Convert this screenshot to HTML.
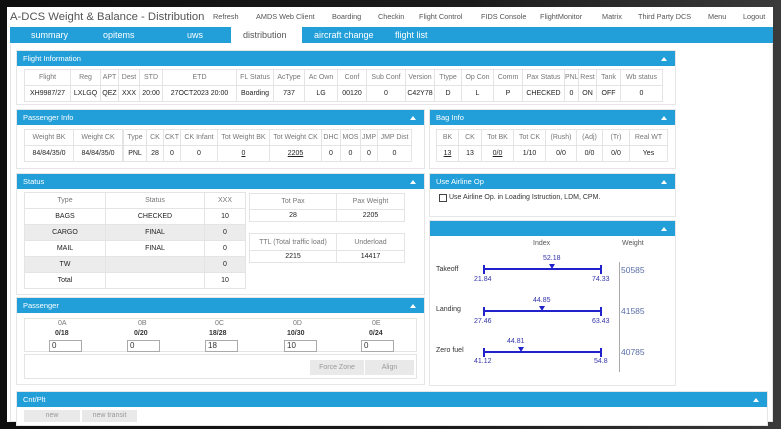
<!DOCTYPE html>
<html><head><meta charset="utf-8"><style>
*{box-sizing:border-box;margin:0;padding:0}
body{width:781px;height:429px;overflow:hidden;background:linear-gradient(90deg,#0e0e0e 0%,#1c1c1c 60%,#3a3a3a 100%);font-family:"Liberation Sans",sans-serif;position:relative;color:#333}
.a{position:absolute}
#win{left:7px;top:7px;width:766px;height:415px;background:#fff;overflow:hidden}
.nav{font-size:7.3px;color:#555;top:12px}
.hdr{background:#229fd9;color:#fff;font-size:7.5px;height:15px;line-height:15px;padding-left:6px}
.hdr:after{content:"";position:absolute;right:8px;top:6px;border-left:3px solid transparent;border-right:3px solid transparent;border-bottom:4px solid #fff}
table{border-collapse:collapse;position:absolute;table-layout:fixed;font-size:7px}
td{border:1px solid #e4e4e4;text-align:center;height:16px;white-space:nowrap;overflow:hidden;color:#222}
tr.h td{color:#777}
.pan{border:1px solid #e6e6e6;background:#fff}
.t{font-size:7px;white-space:nowrap}
u{text-decoration:underline}
.inp{position:absolute;height:12px;width:33px;border:1px solid #aaa;font-size:8px;padding-left:2px;line-height:10px}
.btn{position:absolute;background:#e9e9e9;color:#999;font-size:7px;text-align:center;line-height:15px}
.b{color:#3333aa;font-size:7px}
.tab{top:30px;font-size:9px;color:#fff}
</style></head><body>
<div id="win" class="a"></div>
<div class="a" style="left:10px;top:11px;font-size:11.3px;color:#555">A-DCS Weight &amp; Balance - Distribution</div>
<div class="a nav" style="left:213px">Refresh</div>
<div class="a nav" style="left:256px">AMDS Web Client</div>
<div class="a nav" style="left:332px">Boarding</div>
<div class="a nav" style="left:378px">Checkin</div>
<div class="a nav" style="left:419px">Flight Control</div>
<div class="a nav" style="left:481px">FIDS Console</div>
<div class="a nav" style="left:540px">FlightMonitor</div>
<div class="a nav" style="left:602px">Matrix</div>
<div class="a nav" style="left:638px">Third Party DCS</div>
<div class="a nav" style="left:708px">Menu</div>
<div class="a nav" style="left:743px">Logout</div>
<div class="a" style="left:10px;top:27px;width:763px;height:16px;background:#229fd9"></div>
<div class="a" style="left:231px;top:27px;width:71px;height:17px;background:#fff"></div>
<div class="a tab" style="left:31px">summary</div>
<div class="a tab" style="left:103px">opitems</div>
<div class="a tab" style="left:187px">uws</div>
<div class="a tab" style="left:243px;color:#555">distribution</div>
<div class="a tab" style="left:314px">aircraft change</div>
<div class="a tab" style="left:395px">flight list</div>
<div class="a" style="left:10px;top:44px;width:763px;height:378px;border:1px solid #e4e4e4;border-top:none"></div>

<!-- Flight info -->
<div class="a pan" style="left:16px;top:50px;width:660px;height:55px"></div>
<div class="a hdr" style="left:17px;top:51px;width:658px">Flight Information</div>
<table style="left:24px;top:69px;width:638px">
<colgroup><col style="width:46px"><col style="width:30px"><col style="width:18px"><col style="width:21px"><col style="width:23px"><col style="width:74px"><col style="width:37px"><col style="width:31px"><col style="width:33px"><col style="width:29px"><col style="width:39px"><col style="width:29px"><col style="width:27px"><col style="width:32px"><col style="width:29px"><col style="width:42px"><col style="width:14px"><col style="width:18px"><col style="width:24px"><col style="width:42px"></colgroup>
<tr class="h"><td>Flight</td><td>Reg</td><td>APT</td><td>Dest</td><td>STD</td><td>ETD</td><td>FL Status</td><td>AcType</td><td>Ac Own</td><td>Conf</td><td>Sub Conf</td><td>Version</td><td>Ttype</td><td>Op Con</td><td>Comm</td><td>Pax Status</td><td>PNL</td><td>Rest</td><td>Tank</td><td>Wb status</td></tr>
<tr><td>XH9987/27</td><td>LXLGQ</td><td>QEZ</td><td>XXX</td><td>20:00</td><td>27OCT2023 20:00</td><td>Boarding</td><td>737</td><td>LG</td><td>00120</td><td>0</td><td>C42Y78</td><td>D</td><td>L</td><td>P</td><td>CHECKED</td><td>0</td><td>ON</td><td>OFF</td><td>0</td></tr>
</table>

<!-- Passenger info -->
<div class="a pan" style="left:16px;top:109px;width:409px;height:60px"></div>
<div class="a hdr" style="left:17px;top:110px;width:407px">Passenger Info</div>
<table style="left:24px;top:129px;width:98px"><colgroup><col style="width:49px"><col style="width:49px"></colgroup>
<tr class="h"><td>Weight BK</td><td>Weight CK</td></tr><tr><td>84/84/35/0</td><td>84/84/35/0</td></tr></table>
<table style="left:123px;top:129px;width:288px"><colgroup><col style="width:23px"><col style="width:17px"><col style="width:17px"><col style="width:37px"><col style="width:52px"><col style="width:52px"><col style="width:19px"><col style="width:20px"><col style="width:17px"><col style="width:34px"></colgroup>
<tr class="h"><td>Type</td><td>CK</td><td>CKT</td><td>CK Infant</td><td>Tot Weight BK</td><td>Tot Weight CK</td><td>DHC</td><td>MOS</td><td>JMP</td><td>JMP Dist</td></tr>
<tr><td>PNL</td><td>28</td><td>0</td><td>0</td><td><u>0</u></td><td><u>2205</u></td><td>0</td><td>0</td><td>0</td><td>0</td></tr></table>

<!-- Status -->
<div class="a pan" style="left:16px;top:173px;width:409px;height:122px"></div>
<div class="a hdr" style="left:17px;top:174px;width:407px">Status</div>
<table style="left:24px;top:192px;width:221px"><colgroup><col style="width:81px"><col style="width:99px"><col style="width:41px"></colgroup>
<tr class="h"><td>Type</td><td>Status</td><td>XXX</td></tr>
<tr><td>BAGS</td><td>CHECKED</td><td>10</td></tr>
<tr style="background:#ececec"><td>CARGO</td><td>FINAL</td><td>0</td></tr>
<tr><td>MAIL</td><td>FINAL</td><td>0</td></tr>
<tr style="background:#ececec"><td>TW</td><td></td><td>0</td></tr>
<tr><td>Total</td><td></td><td>10</td></tr></table>
<table style="left:249px;top:193px;width:155px"><colgroup><col style="width:87px"><col style="width:68px"></colgroup>
<tr class="h"><td>Tot Pax</td><td>Pax Weight</td></tr><tr><td style="height:12px">28</td><td style="height:12px">2205</td></tr></table>
<table style="left:249px;top:233px;width:155px"><colgroup><col style="width:87px"><col style="width:68px"></colgroup>
<tr class="h"><td style="height:17px">TTL (Total traffic load)</td><td>Underload</td></tr><tr><td style="height:12px">2215</td><td style="height:12px">14417</td></tr></table>

<!-- Passenger -->
<div class="a pan" style="left:16px;top:297px;width:409px;height:88px"></div>
<div class="a hdr" style="left:17px;top:298px;width:407px">Passenger</div>
<div class="a" style="left:24px;top:318px;width:393px;height:34px;border:1px solid #e4e4e4"></div>
<div class="a" style="left:24px;top:354px;width:393px;height:25px;border:1px solid #e4e4e4"></div>
<div class="a t" style="left:58px;top:320px;color:#777">0A</div><div class="a t" style="left:55px;top:330px;font-weight:bold">0/18</div><div class="inp" style="left:49px;top:340px">0</div>
<div class="a t" style="left:138px;top:320px;color:#777">0B</div><div class="a t" style="left:134px;top:330px;font-weight:bold">0/20</div><div class="inp" style="left:127px;top:340px">0</div>
<div class="a t" style="left:215px;top:320px;color:#777">0C</div><div class="a t" style="left:209px;top:330px;font-weight:bold">18/28</div><div class="inp" style="left:205px;top:340px">18</div>
<div class="a t" style="left:293px;top:320px;color:#777">0D</div><div class="a t" style="left:287px;top:330px;font-weight:bold">10/30</div><div class="inp" style="left:284px;top:340px">10</div>
<div class="a t" style="left:372px;top:320px;color:#777">0E</div><div class="a t" style="left:369px;top:330px;font-weight:bold">0/24</div><div class="inp" style="left:361px;top:340px">0</div>
<div class="btn" style="left:310px;top:360px;width:54px">Force Zone</div>
<div class="btn" style="left:365px;top:360px;width:49px">Align</div>

<!-- Cnt/Plt -->
<div class="a pan" style="left:16px;top:391px;width:752px;height:35px"></div>
<div class="a hdr" style="left:17px;top:392px;width:750px">Cnt/Plt</div>
<div class="btn" style="left:24px;top:410px;width:56px;height:12px;line-height:12px">new</div>
<div class="btn" style="left:82px;top:410px;width:55px;height:12px;line-height:12px">new transit</div>

<!-- Bag info -->
<div class="a pan" style="left:429px;top:109px;width:247px;height:60px"></div>
<div class="a hdr" style="left:430px;top:110px;width:245px">Bag Info</div>
<table style="left:436px;top:129px;width:231px"><colgroup><col style="width:22px"><col style="width:23px"><col style="width:32px"><col style="width:32px"><col style="width:31px"><col style="width:26px"><col style="width:27px"><col style="width:38px"></colgroup>
<tr class="h"><td>BK</td><td>CK</td><td>Tot BK</td><td>Tot CK</td><td>(Rush)</td><td>(Adj)</td><td>(Tr)</td><td>Real WT</td></tr>
<tr><td><u>13</u></td><td>13</td><td><u>0/0</u></td><td>1/10</td><td>0/0</td><td>0/0</td><td>0/0</td><td>Yes</td></tr></table>

<!-- Airline op -->
<div class="a pan" style="left:429px;top:173px;width:247px;height:44px"></div>
<div class="a hdr" style="left:430px;top:174px;width:245px">Use Airline Op</div>
<div class="a" style="left:439px;top:194px;width:8px;height:8px;border:1px solid #444;background:#fff"></div>
<div class="a t" style="left:449px;top:194px;color:#333">Use Airline Op. in Loading Istruction, LDM, CPM.</div>

<!-- Chart -->
<div class="a pan" style="left:429px;top:220px;width:247px;height:166px"></div>
<div class="a hdr" style="left:430px;top:221px;width:245px"></div>
<div class="a t" style="left:533px;top:240px;color:#555">Index</div>
<div class="a t" style="left:622px;top:240px;color:#555">Weight</div>
<div class="a" style="left:619px;top:262px;width:1px;height:110px;background:#aaa"></div>
<svg class="a" style="left:430px;top:250px" width="190" height="125">
<g stroke="#2222cc" stroke-width="2" fill="#2222cc">
<line x1="54" y1="19" x2="171" y2="19"/><line x1="54" y1="15" x2="54" y2="24"/><line x1="171" y1="15" x2="171" y2="24"/>
<line x1="54" y1="61" x2="171" y2="61"/><line x1="54" y1="57" x2="54" y2="66"/><line x1="171" y1="57" x2="171" y2="66"/>
<line x1="54" y1="102" x2="171" y2="102"/><line x1="54" y1="98" x2="54" y2="107"/><line x1="171" y1="98" x2="171" y2="107"/>
</g>
<g fill="#2222cc"><path d="M119 14h6l-3 5z"/><path d="M109 56h6l-3 5z"/><path d="M88 97h6l-3 5z"/></g>
</svg>
<div class="a t" style="left:436px;top:266px;color:#333">Takeoff</div>
<div class="a t" style="left:436px;top:306px;color:#333">Landing</div>
<div class="a t" style="left:436px;top:347px;color:#333">Zero fuel</div>
<div class="a b" style="left:543px;top:255px">52.18</div>
<div class="a b" style="left:474px;top:276px">21.84</div>
<div class="a b" style="left:592px;top:276px">74.33</div>
<div class="a b" style="left:533px;top:297px">44.85</div>
<div class="a b" style="left:474px;top:318px">27.46</div>
<div class="a b" style="left:592px;top:318px">63.43</div>
<div class="a b" style="left:507px;top:338px">44.81</div>
<div class="a b" style="left:474px;top:358px">41.12</div>
<div class="a b" style="left:594px;top:358px">54.8</div>
<div class="a" style="left:621px;top:265px;font-size:8.5px;color:#5a6ea8">50585</div>
<div class="a" style="left:621px;top:306px;font-size:8.5px;color:#5a6ea8">41585</div>
<div class="a" style="left:621px;top:347px;font-size:8.5px;color:#5a6ea8">40785</div>
</body></html>
